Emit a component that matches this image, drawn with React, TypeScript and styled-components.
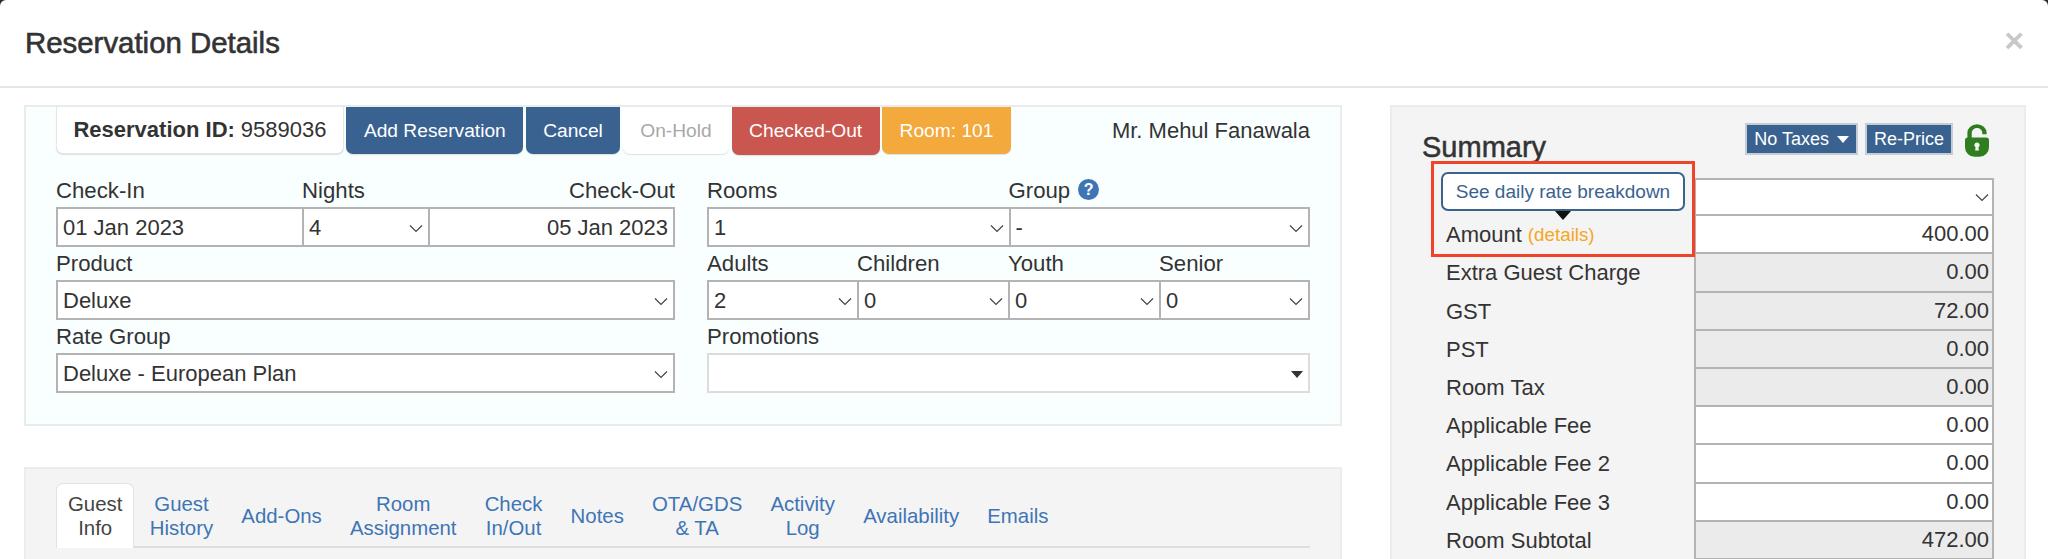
import { Fragment } from 'react'
import styled, { createGlobalStyle } from 'styled-components'

const GlobalStyle = createGlobalStyle`
    html, body {
        margin: 0;
        height: 100%;
        overflow: hidden;
        background: #2b2b2b;
    }
    body {
        font-family: 'Liberation Sans', Arial, sans-serif;
        color: #333;
    }
`
const Modal = styled.div`
    height: 100vh;
    background: #fff;
    border-radius: 6px 6px 0 0;
    overflow: hidden;
`
const Header = styled.header`
    height: 86px;
    display: flex;
    align-items: center;
    justify-content: space-between;
    padding: 0 24px 0 25px;
    border-bottom: 2px solid #e6e6e6;
`
const Title = styled.h1`
    margin: 0;
    font-size: 29.4px;
    font-weight: 400;
    -webkit-text-stroke: 0.6px #333;
`
const Close = styled.span`
    font-size: 34px;
    font-weight: 700;
    line-height: 1;
    color: #c8c8c8;
    margin-top: -6px;
`
const Body = styled.div`
    display: flex;
    padding: 17px 0 0 24px;
`
const LeftColumn = styled.div`
    width: 1318px;
    flex: none;
`
const FormPanel = styled.section`
    box-sizing: border-box;
    height: 321px;
    padding: 0 30px;
    background: #f9ffff;
    border: 2px solid #e9ecec;
`
const StatusBar = styled.div`
    display: flex;
    align-items: flex-start;
    height: 47px;
`
const StatusTab = styled.div<{ $bg?: string; $fg?: string; $tall?: boolean }>`
    box-sizing: border-box;
    height: ${(p) => (p.$tall ? '48px' : '47px')};
    display: flex;
    align-items: center;
    padding: 0 17.5px;
    margin-right: 2.4px;
    font-size: 19.2px;
    background: ${(p) => p.$bg || '#fff'};
    color: ${(p) => p.$fg || '#fff'};
    border-radius: 0 0 7px 7px;
    box-shadow: 0 1px 1px rgba(0, 0, 0, 0.12);
`
const IdTab = styled(StatusTab)`
    width: 288px;
    justify-content: center;
    padding: 0;
    font-size: 22px;
    color: #333;
    border: 1px solid #e6e6e6;
    border-top: 0;
    b {
        margin-right: 6px;
    }
`
const GuestName = styled.div`
    margin-left: auto;
    font-size: 22px;
    line-height: 47px;
`
const FormColumns = styled.div`
    display: flex;
    gap: 32px;
    margin-top: 20px;
`
const FormColumn = styled.div<{ $width: number }>`
    width: ${(p) => p.$width}px;
    flex: none;
`
const LabelRow = styled.div<{ $cols: string }>`
    display: grid;
    grid-template-columns: ${(p) => p.$cols};
    height: 33px;
    font-size: 22.2px;
    line-height: 33px;
`
const Label = styled.label<{ $right?: boolean }>`
    display: flex;
    align-items: center;
    gap: 8px;
    justify-content: ${(p) => (p.$right ? 'flex-end' : 'flex-start')};
`
const FieldRow = styled.div<{ $cols: string }>`
    display: grid;
    grid-template-columns: ${(p) => p.$cols};
    height: 40px;
`
const Field = styled.div<{ $right?: boolean; $light?: boolean }>`
    box-sizing: border-box;
    display: flex;
    align-items: center;
    justify-content: ${(p) => (p.$right ? 'flex-end' : 'space-between')};
    padding: 2px 5px 0;
    margin-right: -2px;
    background: #fff;
    font-size: 22px;
    border: 2px solid ${(p) => (p.$light ? '#dcdcdc' : '#b3b3b3')};
    &:last-child {
        margin-right: 0;
    }
`
const HelpDot = styled.span`
    width: 21px;
    height: 21px;
    border-radius: 50%;
    background: #3f75b5;
    color: #fff;
    font-size: 16px;
    font-weight: 700;
    line-height: 21px;
    text-align: center;
    margin-top: -3px;
`
const TabsPanel = styled.section`
    margin-top: 41px;
    height: 200px;
    padding: 14px 30px 0;
    background: #f4f4f4;
    border: 2px solid #ececec;
`
const TabList = styled.nav`
    display: flex;
    height: 63px;
    border-bottom: 2px solid #dedede;
`
const TabItem = styled.a<{ $active?: boolean }>`
    box-sizing: border-box;
    display: flex;
    align-items: center;
    text-align: center;
    padding: 0 ${(p) => (p.$active ? '11px' : '12.8px')};
    margin-right: 2.55px;
    height: 65px;
    font-size: 20.4px;
    line-height: 24px;
    color: ${(p) => (p.$active ? '#444' : '#3f75b5')};
    ${(p) =>
        p.$active &&
        `background: #fff;
        border: 1px solid #e2e2e2;
        border-bottom: 0;
        border-radius: 7px 7px 0 0;`}
`
const SummaryPanel = styled.aside`
    position: relative;
    box-sizing: border-box;
    width: 636px;
    flex: none;
    margin-left: 48px;
    height: 500px;
    padding: 16px 30px 0;
    background: #f4f4f4;
    border: 2px solid #ececec;
`
const SummaryHeader = styled.div`
    display: flex;
    align-items: flex-start;
    height: 55px;
    padding-right: 5px;
`
const SummaryTitle = styled.h2`
    margin: 6px auto 0 0;
    font-size: 29px;
    line-height: 36px;
    font-weight: 400;
    -webkit-text-stroke: 0.5px #333;
`
const PriceButton = styled.button`
    box-sizing: border-box;
    height: 32px;
    padding: 0 7px;
    margin-left: 7px;
    display: flex;
    align-items: center;
    gap: 8px;
    font-family: inherit;
    font-size: 18px;
    color: #fff;
    background: #3a6290;
    border: 2px solid #c4ccd6;
`
const Caret = styled.span<{ $color: string }>`
    width: 0;
    height: 0;
    border-left: 6px solid transparent;
    border-right: 6px solid transparent;
    border-top: 7px solid ${(p) => p.$color};
`
const LockIcon = styled.svg`
    margin-left: 12px;
    flex: none;
`
const SummaryRow = styled.div`
    display: grid;
    grid-template-columns: 248px 300px;
    margin-left: 24px;
    height: 38.2px;
    font-size: 22px;
`
const RowLabel = styled.div`
    display: flex;
    align-items: center;
    gap: 6px;
`
const Details = styled.span`
    font-size: 18.8px;
    color: #f5a623;
`
const RowValue = styled.div<{ $readonly?: boolean; $first?: boolean }>`
    box-sizing: border-box;
    display: flex;
    align-items: center;
    justify-content: flex-end;
    padding: 0 3px;
    background: ${(p) => (p.$readonly ? '#ebebeb' : '#fff')};
    border: 2px solid #b3b3b3;
    border-top-width: ${(p) => (p.$first ? '2px' : '0')};
`
const Callout = styled.div`
    position: absolute;
    left: 39px;
    top: 54px;
    box-sizing: border-box;
    width: 264px;
    height: 96px;
    padding: 8px 7px 0;
    border: 3.5px solid #f0432a;
`
const TooltipBox = styled.div`
    position: relative;
    box-sizing: border-box;
    height: 39px;
    display: flex;
    align-items: center;
    justify-content: center;
    font-size: 19px;
    color: #3a6290;
    background: #fff;
    border: 2px solid #3a6290;
    border-radius: 7px;
    &::after {
        content: '';
        position: absolute;
        left: 50%;
        bottom: -11px;
        margin-left: -8px;
        border-left: 8px solid transparent;
        border-right: 8px solid transparent;
        border-top: 9px solid #111;
    }
`

function Chevron() {
    return (
        <svg width="14" height="9" viewBox="0 0 14 9" fill="none">
            <path d="M1 1.5 L7 7.5 L13 1.5" stroke="#444" strokeWidth="1.2" />
        </svg>
    )
}

const rows = [
    { label: 'Extra Guest Charge', value: '0.00', readonly: true },
    { label: 'GST', value: '72.00', readonly: true },
    { label: 'PST', value: '0.00', readonly: true },
    { label: 'Room Tax', value: '0.00', readonly: true },
    { label: 'Applicable Fee', value: '0.00' },
    { label: 'Applicable Fee 2', value: '0.00' },
    { label: 'Applicable Fee 3', value: '0.00' },
    { label: 'Room Subtotal', value: '472.00', readonly: true },
]

const tabs = [
    ['Guest', 'Info'],
    ['Guest', 'History'],
    ['Add-Ons'],
    ['Room', 'Assignment'],
    ['Check', 'In/Out'],
    ['Notes'],
    ['OTA/GDS', '& TA'],
    ['Activity', 'Log'],
    ['Availability'],
    ['Emails'],
]

const dateCols = '246px 126px 1fr'
const halfCols = '1fr 1fr'
const quarterCols = '150px 151px 151px 1fr'

export default function App() {
    return (
        <Modal>
            <GlobalStyle />
            <Header>
                <Title>Reservation Details</Title>
                <Close>×</Close>
            </Header>
            <Body>
                <LeftColumn>
                    <FormPanel>
                        <StatusBar>
                            <IdTab>
                                <b>Reservation ID:</b> 9589036
                            </IdTab>
                            <StatusTab $bg="#3a6290">Add Reservation</StatusTab>
                            <StatusTab $bg="#3a6290">Cancel</StatusTab>
                            <StatusTab $fg="#a8a8a8">On-Hold</StatusTab>
                            <StatusTab $bg="#c9574f" $tall>Checked-Out</StatusTab>
                            <StatusTab $bg="#f3a93b">Room: 101</StatusTab>
                            <GuestName>Mr. Mehul Fanawala</GuestName>
                        </StatusBar>
                        <FormColumns>
                            <FormColumn $width={619}>
                                <LabelRow $cols={dateCols}>
                                    <Label>Check-In</Label>
                                    <Label>Nights</Label>
                                    <Label $right>Check-Out</Label>
                                </LabelRow>
                                <FieldRow $cols={dateCols}>
                                    <Field>01 Jan 2023</Field>
                                    <Field>4<Chevron /></Field>
                                    <Field $right>05 Jan 2023</Field>
                                </FieldRow>
                                <LabelRow $cols="1fr">
                                    <Label>Product</Label>
                                </LabelRow>
                                <FieldRow $cols="1fr">
                                    <Field>Deluxe<Chevron /></Field>
                                </FieldRow>
                                <LabelRow $cols="1fr">
                                    <Label>Rate Group</Label>
                                </LabelRow>
                                <FieldRow $cols="1fr">
                                    <Field>Deluxe - European Plan<Chevron /></Field>
                                </FieldRow>
                            </FormColumn>
                            <FormColumn $width={603}>
                                <LabelRow $cols={halfCols}>
                                    <Label>Rooms</Label>
                                    <Label>Group <HelpDot>?</HelpDot></Label>
                                </LabelRow>
                                <FieldRow $cols={halfCols}>
                                    <Field>1<Chevron /></Field>
                                    <Field>-<Chevron /></Field>
                                </FieldRow>
                                <LabelRow $cols={quarterCols}>
                                    <Label>Adults</Label>
                                    <Label>Children</Label>
                                    <Label>Youth</Label>
                                    <Label>Senior</Label>
                                </LabelRow>
                                <FieldRow $cols={quarterCols}>
                                    <Field>2<Chevron /></Field>
                                    <Field>0<Chevron /></Field>
                                    <Field>0<Chevron /></Field>
                                    <Field>0<Chevron /></Field>
                                </FieldRow>
                                <LabelRow $cols="1fr">
                                    <Label>Promotions</Label>
                                </LabelRow>
                                <FieldRow $cols="1fr">
                                    <Field $light>
                                        <span />
                                        <Caret $color="#333" />
                                    </Field>
                                </FieldRow>
                            </FormColumn>
                        </FormColumns>
                    </FormPanel>
                    <TabsPanel>
                        <TabList>
                            {tabs.map((lines, i) => (
                                <TabItem key={i} $active={i === 0}>
                                    <span>
                                        {lines.map((line, j) => (
                                            <Fragment key={j}>
                                                {j > 0 && <br />}
                                                {line}
                                            </Fragment>
                                        ))}
                                    </span>
                                </TabItem>
                            ))}
                        </TabList>
                    </TabsPanel>
                </LeftColumn>
                <SummaryPanel>
                    <SummaryHeader>
                        <SummaryTitle>Summary</SummaryTitle>
                        <PriceButton>No Taxes <Caret $color="#fff" /></PriceButton>
                        <PriceButton>Re-Price</PriceButton>
                        <LockIcon width="24" height="34" viewBox="0 0 25 35">
                            <path
                                d="M2.5 16 V10 a10 9 0 0 1 20 0 V11.5 h-4.5 V10 a5.5 5 0 0 0 -11 0 V16 Z"
                                fill="#2e7d1e"
                            />
                            <path
                                d="M3 15 H22 a3 3 0 0 1 3 3 V25 a10 10 0 0 1 -10 10 H10 a10 10 0 0 1 -10 -10 V18 a3 3 0 0 1 3 -3 Z M12.5 20 a2.7 2.7 0 0 0 -1.5 5 L10.5 28.5 h4 L14 25 a2.7 2.7 0 0 0 -1.5 -5 Z"
                                fill="#2e7d1e"
                                fillRule="evenodd"
                            />
                        </LockIcon>
                    </SummaryHeader>
                    <SummaryRow>
                        <RowLabel />
                        <RowValue $first><Chevron /></RowValue>
                    </SummaryRow>
                    <SummaryRow>
                        <RowLabel>Amount <Details>(details)</Details></RowLabel>
                        <RowValue>400.00</RowValue>
                    </SummaryRow>
                    {rows.map((row) => (
                        <SummaryRow key={row.label}>
                            <RowLabel>{row.label}</RowLabel>
                            <RowValue $readonly={row.readonly}>{row.value}</RowValue>
                        </SummaryRow>
                    ))}
                    <Callout>
                        <TooltipBox>See daily rate breakdown</TooltipBox>
                    </Callout>
                </SummaryPanel>
            </Body>
        </Modal>
    )
}
